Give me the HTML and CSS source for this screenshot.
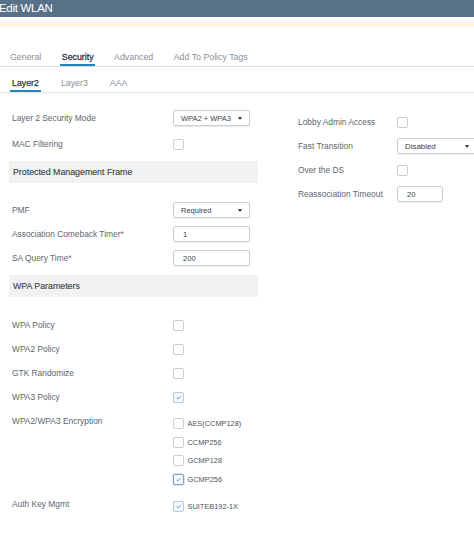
FILE: index.html
```html
<!DOCTYPE html>
<html>
<head>
<meta charset="utf-8">
<title>Edit WLAN</title>
<link rel="stylesheet" href="styles.css">
</head>
<body>
<div class="header">Edit WLAN</div>
<div class="notice"></div>
<nav class="tabs">
  <span class="tab">General</span>
  <span class="tab active">Security</span>
  <span class="tab">Advanced</span>
  <span class="tab">Add To Policy Tags</span>
</nav>
<nav class="subtabs">
  <span class="subtab active">Layer2</span>
  <span class="subtab">Layer3</span>
  <span class="subtab">AAA</span>
</nav>
<div class="content">
  <div class="col-left">
    <div class="row tall"><span class="lbl">Layer 2 Security Mode</span><div class="select"><span>WPA2 + WPA3</span><span class="caret"></span></div></div>
    <div class="row tall"><span class="lbl">MAC Filtering</span><span class="cb"></span></div>
    <div class="section s1">Protected Management Frame</div>
    <div class="row"><span class="lbl">PMF</span><div class="select"><span>Required</span><span class="caret"></span></div></div>
    <div class="row"><span class="lbl">Association Comeback Timer*</span><div class="input">1</div></div>
    <div class="row"><span class="lbl">SA Query Time*</span><div class="input">200</div></div>
    <div class="section s2">WPA Parameters</div>
    <div class="row"><span class="lbl">WPA Policy</span><span class="cb"></span></div>
    <div class="row"><span class="lbl">WPA2 Policy</span><span class="cb"></span></div>
    <div class="row"><span class="lbl">GTK Randomize</span><span class="cb"></span></div>
    <div class="row"><span class="lbl">WPA3 Policy</span><span class="cb on"><svg viewBox="0 0 10 10" width="7" height="7"><path d="M2.3 5.4 L4.1 7.1 L7.8 3.2" fill="none" stroke="#3f8ccc" stroke-width="1.2"/></svg></span></div>
    <div class="row multi">
      <span class="lbl">WPA2/WPA3 Encryption</span>
      <div class="opts">
        <div class="opt"><span class="cb"></span><span>AES(CCMP128)</span></div>
        <div class="opt"><span class="cb"></span><span>CCMP256</span></div>
        <div class="opt"><span class="cb"></span><span>GCMP128</span></div>
        <div class="opt"><span class="cb on focus"><svg viewBox="0 0 10 10" width="7" height="7"><path d="M2.3 5.4 L4.1 7.1 L7.8 3.2" fill="none" stroke="#3f8ccc" stroke-width="1.2"/></svg></span><span>GCMP256</span></div>
      </div>
    </div>
    <div class="row multi auth">
      <span class="lbl">Auth Key Mgmt</span>
      <div class="opts">
        <div class="opt"><span class="cb on"><svg viewBox="0 0 10 10" width="7" height="7"><path d="M2.3 5.4 L4.1 7.1 L7.8 3.2" fill="none" stroke="#3f8ccc" stroke-width="1.2"/></svg></span><span>SUITEB192-1X</span></div>
      </div>
    </div>
  </div>
  <div class="col-right">
    <div class="row"><span class="lbl">Lobby Admin Access</span><span class="cb"></span></div>
    <div class="row"><span class="lbl">Fast Transition</span><div class="select wide"><span>Disabled</span><span class="caret"></span></div></div>
    <div class="row"><span class="lbl">Over the DS</span><span class="cb"></span></div>
    <div class="row"><span class="lbl">Reassociation Timeout</span><div class="input short">20</div></div>
  </div>
</div>
</body>
</html>
```
FILE: styles.css
```css
html, body {
  margin: 0;
  padding: 0;
  overflow: hidden;
}
body {
  width: 474px;
  height: 542px;
  background: #fff;
  font-family: "Liberation Sans", Arial, sans-serif;
}
.header {
  height: 17px;
  background: #587188;
  color: #fff;
  font-size: 11.5px;
  line-height: 17px;
  letter-spacing: -0.3px;
  text-indent: -1px;
}
.notice {
  margin-top: 5px;
  height: 5px;
  background: #fcf6e2;
}
.tabs {
  display: flex;
  gap: 17.5px;
  padding-left: 8.5px;
  margin-top: 24px;
  border-bottom: 1px solid #dcdfe2;
}
.tab {
  font-size: 8.8px;
  line-height: 12px;
  padding: 0 1.5px 1px;
  border-bottom: 2px solid transparent;
  color: #8a9096;
}
.tab.active {
  color: #2f3a42;
  border-bottom-color: #2384b8;
  -webkit-text-stroke: 0.3px #2f3a42;
}
.subtabs {
  display: flex;
  gap: 18px;
  padding-left: 10px;
  margin-top: 10px;
  border-bottom: 1px solid #e3e5e7;
}
.subtab {
  font-size: 8.8px;
  line-height: 12px;
  padding: 0 2px 1px;
  border-bottom: 2px solid transparent;
  color: #8a9096;
}
.subtab.active {
  color: #2f3a42;
  border-bottom-color: #2384b8;
  -webkit-text-stroke: 0.25px #2f3a42;
}
.content {
  display: flex;
  align-items: flex-start;
}
.col-left {
  margin-left: 9px;
  width: 249px;
  flex: 0 0 249px;
  padding-top: 12px;
}
.col-right {
  margin-left: 40px;
  width: 180px;
  flex: 0 0 180px;
  padding-top: 17px;
}
.row {
  display: flex;
  align-items: center;
  height: 24px;
}
.row.tall {
  height: 26px;
}
.lbl {
  flex: 0 0 164px;
  box-sizing: border-box;
  padding-left: 3px;
  font-size: 8.4px;
  color: #5b666e;
}
.col-right .lbl {
  flex: 0 0 99px;
  padding-left: 0;
}
.section {
  height: 22px;
  background: #f2f2f2;
  padding-left: 4px;
  display: flex;
  align-items: center;
  font-size: 8.8px;
  color: #3b464e;
  -webkit-text-stroke: 0.15px #3b464e;
}
.section.s1 {
  margin: 4px 0 15px;
}
.section.s2 {
  margin: 5px 0 16px;
}
.row.multi {
  height: auto;
  align-items: flex-start;
}
.row.multi .lbl {
  height: 24px;
  display: flex;
  align-items: center;
}
.row.auth {
  margin-top: 3px;
}
.opts {
  padding-top: 5.5px;
}
.opt {
  height: 18.5px;
  display: flex;
  align-items: center;
  gap: 3.5px;
  font-size: 7.4px;
  color: #4a5359;
}
.select {
  display: flex;
  align-items: center;
  justify-content: space-between;
  width: 77px;
  height: 16px;
  box-sizing: border-box;
  border: 1px solid #c6ccd2;
  border-radius: 2px;
  padding: 0 7px 0 7px;
  font-size: 7.5px;
  color: #3a4248;
  box-shadow: 0 1px 1px rgba(0, 0, 0, 0.08);
}
.select.wide {
  width: 80px;
  flex: 0 0 80px;
  font-size: 7.9px;
}
.caret {
  width: 0;
  height: 0;
  border-left: 2px solid transparent;
  border-right: 2px solid transparent;
  border-top: 3px solid #2c3338;
}
.input {
  display: flex;
  align-items: center;
  width: 77px;
  height: 16px;
  box-sizing: border-box;
  border: 1px solid #c6ccd2;
  border-radius: 2px;
  padding-left: 9px;
  font-size: 7.6px;
  color: #3a4248;
  box-shadow: 0 1px 1px rgba(0, 0, 0, 0.05);
}
.input.short {
  width: 46px;
}
.cb {
  flex: 0 0 auto;
  width: 11px;
  height: 11px;
  box-sizing: border-box;
  border: 1px solid #c8cfd9;
  border-radius: 2px;
  display: flex;
  align-items: center;
  justify-content: center;
  background: #fff;
}
.cb.on {
  border-color: #b9cadf;
  background: #f4f8fc;
}
.cb.focus {
  border-color: #7e9cbf;
  box-shadow: 0 0 0 1px #dde8f3;
}
```
